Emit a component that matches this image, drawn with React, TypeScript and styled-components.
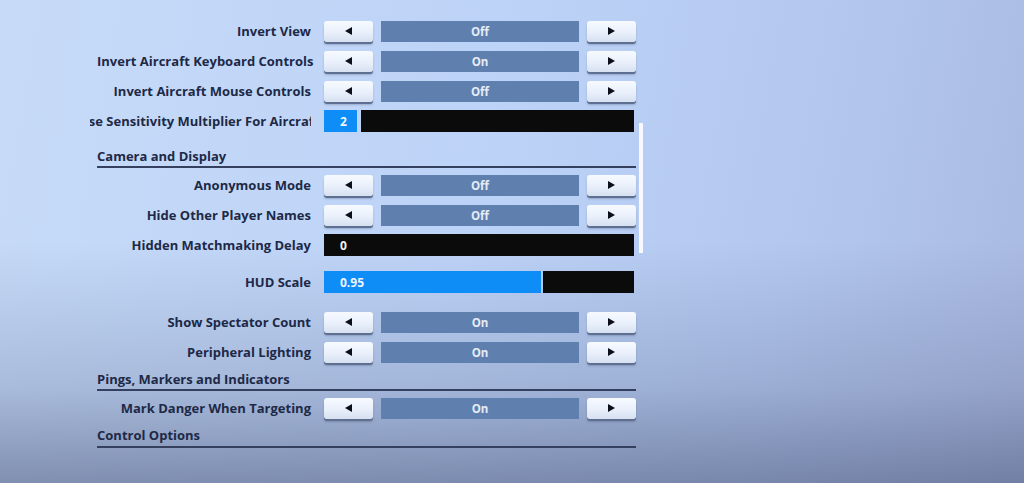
import React from 'react';
import styled, { createGlobalStyle } from 'styled-components';

const GlobalStyle = createGlobalStyle`
  html, body {
    margin: 0;
    padding: 0;
    overflow: hidden;
  }
  body {
    font-family: 'Open Sans', Lato, sans-serif;
  }
`;

const Screen = styled.div`
  width: 1024px;
  height: 483px;
  overflow: hidden;
  background:
    linear-gradient(to bottom, rgba(70, 80, 115, 0) 50%, rgba(70, 80, 115, 0.22) 80%, rgba(60, 70, 105, 0.5) 100%),
    linear-gradient(100deg, #c7dbf8 0%, #bdd3f7 45%, #b4c8ef 75%, #a9b9e1 100%);
`;

const Panel = styled.div`
  position: relative;
  width: 539px;
  margin-left: 97px;
  padding-top: 16px;
  display: flex;
  flex-direction: column;
`;

const Row = styled.div<{ $pad?: string }>`
  display: grid;
  grid-template-columns: 214px 312px;
  column-gap: 13px;
  align-items: center;
  min-height: 30px;
  padding: ${(p) => p.$pad ?? '0'};
`;

const Label = styled.div<{ $clipped?: boolean }>`
  color: #1d2946;
  font-weight: 700;
  font-size: 13px;
  text-align: right;
  white-space: nowrap;
  ${(p) =>
    p.$clipped &&
    `
    overflow: hidden;
    margin-left: -7px;
    text-align: left;
  `}
`;

const Marquee = styled.span`
  display: inline-block;
  margin-left: -30px;
`;

const Toggle = styled.div`
  display: grid;
  grid-template-columns: 49px 1fr 49px;
  column-gap: 8px;
  align-items: center;
`;

const ArrowButton = styled.div`
  height: 21px;
  border-radius: 3px;
  background: linear-gradient(to bottom, #f7faff 0%, #e9f0fb 55%, #d6e0f0 100%);
  box-shadow: 0 2px 0 #5f6f92, 0 3px 2px rgba(40, 50, 80, 0.25);
  display: flex;
  align-items: center;
  justify-content: center;
`;

const ValueBox = styled.div`
  height: 21px;
  background: #5f80ae;
  color: #e4ecf8;
  font-size: 11.5px;
  font-weight: 700;
  display: flex;
  align-items: center;
  justify-content: center;
`;

const Track = styled.div<{ $gap: number }>`
  display: flex;
  gap: ${(p) => p.$gap}px;
  height: 22px;
  width: 310px;
`;

const Fill = styled.div`
  background: #0f8df7;
  color: #eef6ff;
  font-size: 12px;
  font-weight: 700;
  display: flex;
  align-items: center;
  padding-left: 16px;
  box-sizing: border-box;
`;

const Rest = styled.div`
  flex: 1;
  background: #0c0b0c;
  color: #f2f2f2;
  font-size: 12px;
  font-weight: 700;
  display: flex;
  align-items: center;
  padding-left: 16px;
`;

const Header = styled.div<{ $top: number; $bottom: number }>`
  padding-top: ${(p) => p.$top}px;
  padding-bottom: ${(p) => p.$bottom}px;
  border-bottom: 2px solid #34405e;
  color: #1d2946;
  font-weight: 700;
  font-size: 13px;
  line-height: 16px;
  margin-bottom: 2px;
`;

const Scrollbar = styled.div`
  position: absolute;
  left: 542px;
  top: 123px;
  width: 4px;
  height: 130px;
  background: #f7f9ff;
`;

const Arrow = ({ dir }: { dir: 'left' | 'right' }) => (
  <svg width="7" height="8" viewBox="0 0 7 8">
    {dir === 'left' ? <path d="M7 0 L0 4 L7 8 Z" fill="#0c0f1a" /> : <path d="M0 0 L7 4 L0 8 Z" fill="#0c0f1a" />}
  </svg>
);

const ToggleRow = ({ label, value }: { label: string; value: string }) => (
  <Row>
    <Label>{label}</Label>
    <Toggle>
      <ArrowButton>
        <Arrow dir="left" />
      </ArrowButton>
      <ValueBox>{value}</ValueBox>
      <ArrowButton>
        <Arrow dir="right" />
      </ArrowButton>
    </Toggle>
  </Row>
);

const SliderControl = ({ value, fraction, gap }: { value: string; fraction: number; gap: number }) => (
  <Track $gap={gap}>
    <Fill style={{ width: `${Math.round(fraction * 310)}px` }}>{value}</Fill>
    <Rest />
  </Track>
);

export default function App() {
  return (
    <>
      <GlobalStyle />
      <Screen>
        <Panel>
          <ToggleRow label="Invert View" value="Off" />
          <ToggleRow label="Invert Aircraft Keyboard Controls" value="On" />
          <ToggleRow label="Invert Aircraft Mouse Controls" value="Off" />
          <Row>
            <Label $clipped>
              <Marquee>Mouse Sensitivity Multiplier For Aircraft</Marquee>
            </Label>
            <SliderControl value="2" fraction={0.107} gap={4} />
          </Row>
          <Header $top={12} $bottom={2}>Camera and Display</Header>
          <ToggleRow label="Anonymous Mode" value="Off" />
          <ToggleRow label="Hide Other Player Names" value="Off" />
          <Row>
            <Label>Hidden Matchmaking Delay</Label>
            <Track $gap={0}>
              <Rest>0</Rest>
            </Track>
          </Row>
          <Row $pad="7px 0 10px">
            <Label>HUD Scale</Label>
            <SliderControl value="0.95" fraction={0.7} gap={2} />
          </Row>
          <ToggleRow label="Show Spectator Count" value="On" />
          <ToggleRow label="Peripheral Lighting" value="On" />
          <Header $top={4} $bottom={2}>Pings, Markers and Indicators</Header>
          <ToggleRow label="Mark Danger When Targeting" value="On" />
          <Header $top={4} $bottom={3}>Control Options</Header>
          <Scrollbar />
        </Panel>
      </Screen>
    </>
  );
}
